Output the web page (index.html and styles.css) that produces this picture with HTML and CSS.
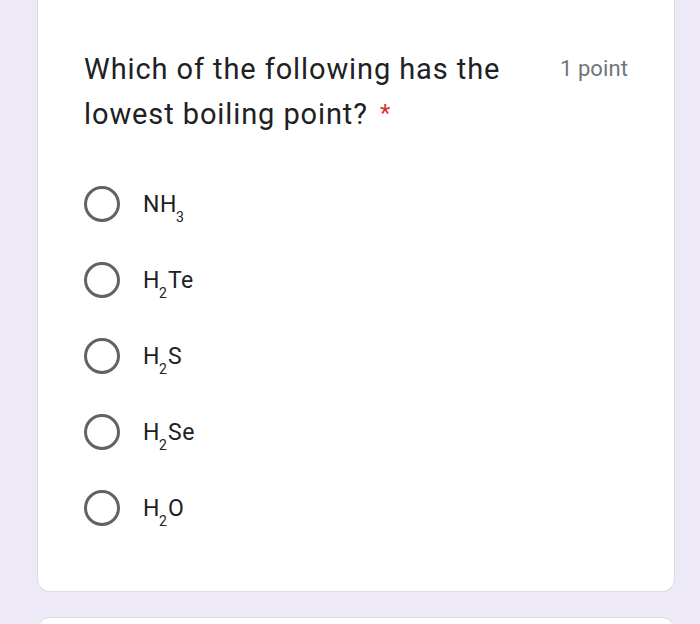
FILE: index.html
```html
<!DOCTYPE html>
<html>
<head>
<meta charset="utf-8">
<link rel="stylesheet" href="styles.css">
</head>
<body>
<div class="page">
  <div class="card">
    <div class="header">
      <div class="title">Which of the following has the lowest boiling point?<span class="req">*</span></div>
      <div class="points">1 point</div>
    </div>
    <div class="options">
      <div class="option"><span class="radio"></span><span class="label">NH<sub>3</sub></span></div>
      <div class="option"><span class="radio"></span><span class="label">H<sub>2</sub>Te</span></div>
      <div class="option"><span class="radio"></span><span class="label">H<sub>2</sub>S</span></div>
      <div class="option"><span class="radio"></span><span class="label">H<sub>2</sub>Se</span></div>
      <div class="option"><span class="radio"></span><span class="label">H<sub>2</sub>O</span></div>
    </div>
  </div>
  <div class="card next"></div>
</div>
</body>
</html>
```
FILE: styles.css
```css
html, body {
  margin: 0;
  padding: 0;
  background: #ede9f6;
  font-family: Roboto, "Liberation Sans", sans-serif;
}
.page {
  width: 700px;
  height: 624px;
  overflow: hidden;
  padding: 0 25px 0 37px;
  box-sizing: border-box;
}
.card {
  background: #fff;
  border: 1px solid #dadce0;
  border-top: none;
  border-radius: 0 0 13px 13px;
  height: 592px;
  box-sizing: border-box;
  padding: 47px 46px 0 46px;
}
.card.next {
  margin-top: 25px;
  border-top: 1px solid #dadce0;
  border-radius: 13px 13px 0 0;
  height: 40px;
  padding: 0;
}
.header {
  display: flex;
  justify-content: space-between;
  align-items: flex-start;
}
.title {
  width: 450px;
  font-size: 29px;
  line-height: 44px;
  color: #202124;
  letter-spacing: 0.9px;
}
.req {
  color: #d93025;
  margin-left: 12px;
  font-size: 24px;
  vertical-align: 3px;
}
.points {
  font-size: 22px;
  color: #70757a;
  margin-top: 9px;
  letter-spacing: 0.1px;
}
.options {
  margin-top: 50px;
  display: flex;
  flex-direction: column;
  gap: 40px;
}
.option {
  display: flex;
  align-items: center;
  height: 36px;
  gap: 23px;
}
.radio {
  width: 36px;
  height: 36px;
  box-sizing: border-box;
  border: 3.5px solid #5f6368;
  border-radius: 50%;
  flex: none;
}
.label {
  font-size: 23px;
  color: #202124;
  letter-spacing: 0.6px;
}
.label sub {
  font-size: 14px;
  vertical-align: -10px;
  line-height: 0;
  letter-spacing: 0;
  margin: 0 1px 0 -1px;
}
```
